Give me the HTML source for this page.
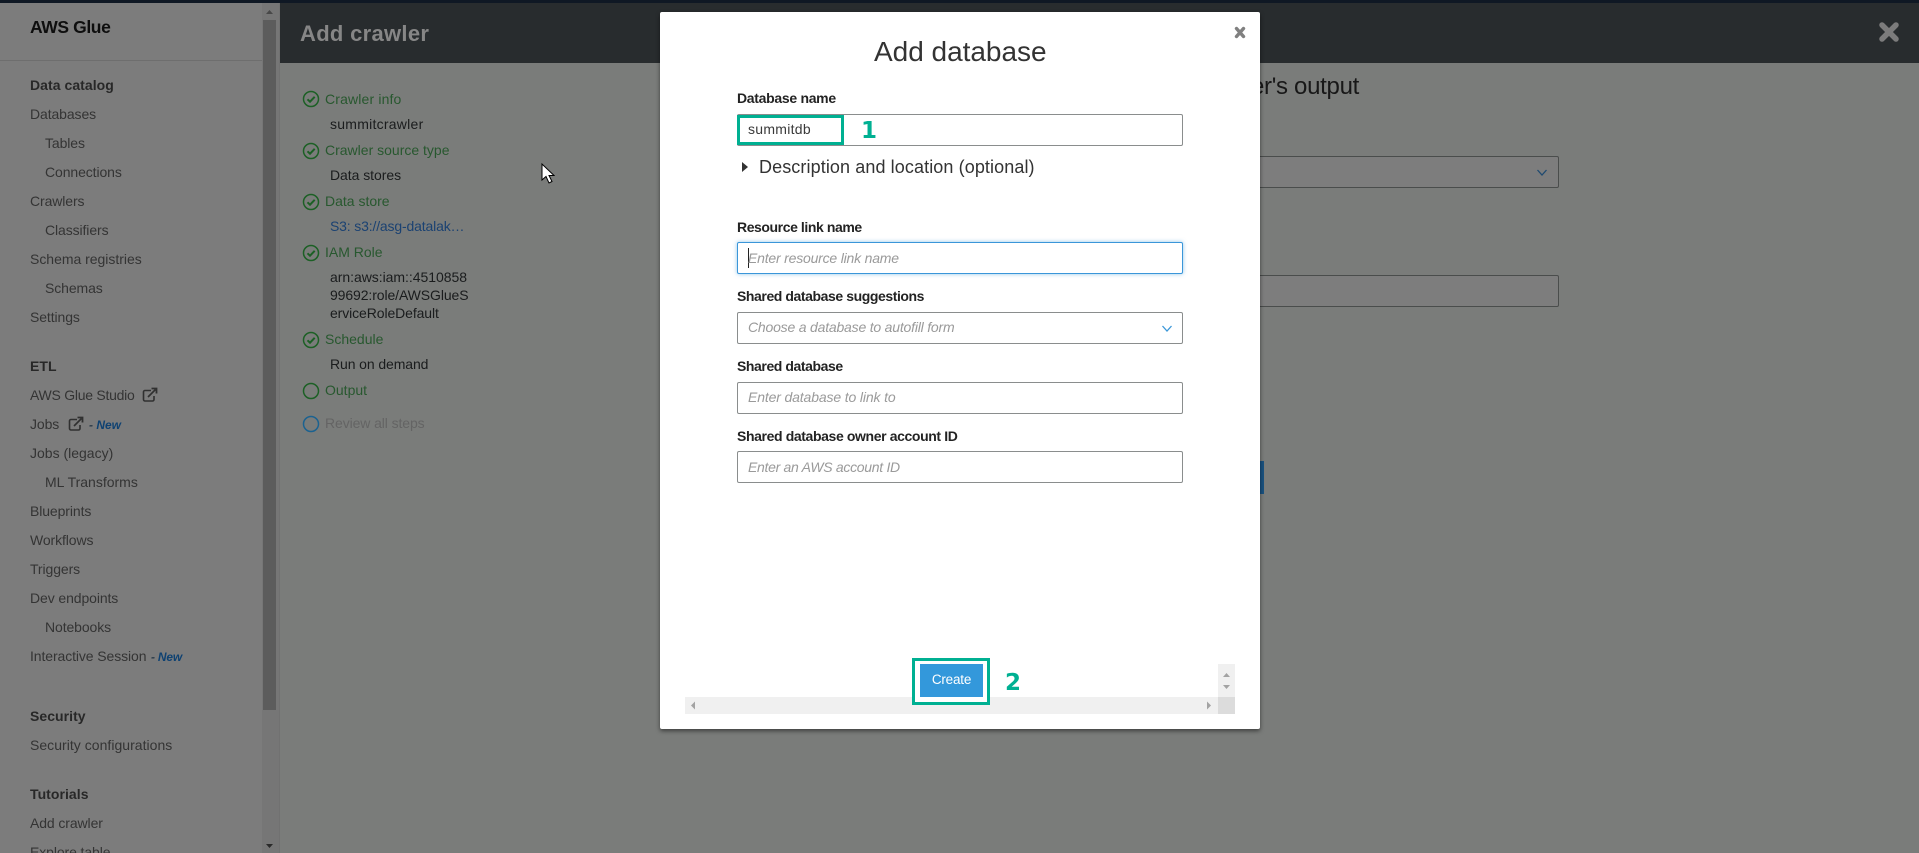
<!DOCTYPE html>
<html><head><meta charset="utf-8"><title>Add database</title>
<style>
html,body{margin:0;padding:0;width:1919px;height:853px;overflow:hidden;background:#7a7c7a}
body{position:relative;font-family:"Liberation Sans",sans-serif;font-size:14px;color:#333}
.t{position:absolute;height:20px;line-height:20px;white-space:nowrap}
.a{position:absolute}
.n{color:#343434;letter-spacing:-.1px}
.h{color:#282828;font-weight:bold;letter-spacing:.05px}
.g{color:#28582f;letter-spacing:0}
.d{color:#1a1c1d;letter-spacing:-.1px}
.l{color:#232323;font-weight:bold;letter-spacing:-.42px;font-size:14px}
.i{position:absolute;left:737px;width:444px;height:30px;border:1px solid #8a8d8d;border-radius:2px;background:#fff;box-sizing:content-box}
.p{color:#9a9a9a;font-style:italic;letter-spacing:-.2px;left:748px}
.ni{font-style:italic;font-weight:bold;font-size:12px;color:#0f4272}
.bgi{position:absolute;background:#7d7d7d;border:1px solid #4a4d4c;border-radius:2px}
.num{font-family:"DejaVu Sans",sans-serif;font-weight:bold;font-size:23px;color:#00b092;height:24px;line-height:24px}
</style></head><body>

<div class="a" style="left:0;top:0;width:1919px;height:3px;background:#0f1824"></div>
<div class="a" style="left:0;top:3px;width:280px;height:850px;background:#7c7c7c"></div>
<div class="a" style="left:262px;top:3px;width:17px;height:850px;background:#767676"></div>
<div class="a" style="left:279px;top:3px;width:1px;height:850px;background:#717171"></div>
<div class="a" style="left:263px;top:20px;width:13px;height:690px;background:#5c5c5c"></div>
<svg class="a" style="left:264px;top:8px" width="11" height="8"><path d="M2 6L5.500 2 9 6z" fill="#484848"/></svg>
<svg class="a" style="left:264px;top:842px" width="11" height="8"><path d="M2 2L5.500 6 9 2z" fill="#2a2a2a"/></svg>
<div class="a" style="left:0;top:60px;width:262px;height:1px;background:#6e6e6e"></div>

<div class="t" style="left:30px;top:17px;font-size:17.500px;font-weight:bold;color:#0e0e0e;letter-spacing:-.4px">AWS Glue</div>
<div class="t h" style="left:30px;top:75px">Data catalog</div>
<div class="t n" style="left:30px;top:104px">Databases</div>
<div class="t n" style="left:45px;top:133px">Tables</div>
<div class="t n" style="left:45px;top:162px">Connections</div>
<div class="t n" style="left:30px;top:191px">Crawlers</div>
<div class="t n" style="left:45px;top:220px">Classifiers</div>
<div class="t n" style="left:30px;top:249px;letter-spacing:-.02px">Schema registries</div>
<div class="t n" style="left:45px;top:278px">Schemas</div>
<div class="t n" style="left:30px;top:307px">Settings</div>
<div class="t h" style="left:30px;top:356px">ETL</div>
<div class="t n" style="left:30px;top:385px;letter-spacing:-.26px">AWS Glue Studio</div>
<svg class="a" style="left:142px;top:387px" width="16" height="15" fill="none" stroke="#303030" stroke-width="1.600"><path d="M9 3.500H3A1.500 1.500 0 0 0 1.500 5v7.500A1.500 1.500 0 0 0 3 14h7.500a1.500 1.500 0 0 0 1.500-1.500V9"/><path d="M6 10L13.500 2.500"/><path d="M9.500 1.500h5V6.500" stroke-width="1.800"/></svg>
<div class="t n" style="left:30px;top:414px">Jobs</div>
<svg class="a" style="left:68px;top:416px" width="16" height="15" fill="none" stroke="#303030" stroke-width="1.600"><path d="M9 3.500H3A1.500 1.500 0 0 0 1.500 5v7.500A1.500 1.500 0 0 0 3 14h7.500a1.500 1.500 0 0 0 1.500-1.500V9"/><path d="M6 10L13.500 2.500"/><path d="M9.500 1.500h5V6.500" stroke-width="1.800"/></svg>
<div class="t ni" style="left:89px;top:415px"><span style="color:#2a3a48">-</span> New</div>
<div class="t n" style="left:30px;top:443px;letter-spacing:0">Jobs (legacy)</div>
<div class="t n" style="left:45px;top:472px;letter-spacing:0">ML Transforms</div>
<div class="t n" style="left:30px;top:501px">Blueprints</div>
<div class="t n" style="left:30px;top:530px">Workflows</div>
<div class="t n" style="left:30px;top:559px">Triggers</div>
<div class="t n" style="left:30px;top:588px">Dev endpoints</div>
<div class="t n" style="left:45px;top:617px">Notebooks</div>
<div class="t n" style="left:30px;top:646px">Interactive Session</div>
<div class="t ni" style="left:151px;top:647px;letter-spacing:-.2px"><span style="color:#2a3a48">-</span> New</div>
<div class="t h" style="left:30px;top:706px">Security</div>
<div class="t n" style="left:30px;top:735px;letter-spacing:.03px">Security configurations</div>
<div class="t h" style="left:30px;top:784px">Tutorials</div>
<div class="t n" style="left:30px;top:813px">Add crawler</div>
<div class="t n" style="left:30px;top:842px">Explore table</div>

<div class="a" style="left:280px;top:3px;width:1639px;height:60px;background:#282c2e"></div>
<div class="t" style="left:300px;top:22px;font-size:22px;height:24px;line-height:24px;font-weight:bold;color:#868686;letter-spacing:.3px">Add crawler</div>
<svg class="a" style="left:1879px;top:22px" width="20" height="20"><path d="M3 3L17 17M17 3L3 17" stroke="#7c7c7c" stroke-width="5.500" stroke-linecap="round"/></svg>

<svg class="a" style="left:302px;top:90px" width="18" height="18" fill="none"><circle cx="9" cy="9" r="7.500" stroke="#1c6025" stroke-width="1.500"/><path d="M5.500 9.300L8 11.700 12.700 6.800" stroke="#1c6025" stroke-width="2"/></svg>
<div class="t g" style="left:325px;top:89px;letter-spacing:.15px">Crawler info</div>
<div class="t d" style="left:330px;top:114px;letter-spacing:.25px">summitcrawler</div>
<svg class="a" style="left:302px;top:142px" width="18" height="18" fill="none"><circle cx="9" cy="9" r="7.500" stroke="#1c6025" stroke-width="1.500"/><path d="M5.500 9.300L8 11.700 12.700 6.800" stroke="#1c6025" stroke-width="2"/></svg>
<div class="t g" style="left:325px;top:140px">Crawler source type</div>
<div class="t d" style="left:330px;top:165px;letter-spacing:-.05px">Data stores</div>
<svg class="a" style="left:302px;top:193px" width="18" height="18" fill="none"><circle cx="9" cy="9" r="7.500" stroke="#1c6025" stroke-width="1.500"/><path d="M5.500 9.300L8 11.700 12.700 6.800" stroke="#1c6025" stroke-width="2"/></svg>
<div class="t g" style="left:325px;top:191px">Data store</div>
<div class="t" style="left:330px;top:216px;color:#1b4272;letter-spacing:-.16px">S3: s3://asg-datalak…</div>
<svg class="a" style="left:302px;top:244px" width="18" height="18" fill="none"><circle cx="9" cy="9" r="7.500" stroke="#1c6025" stroke-width="1.500"/><path d="M5.500 9.300L8 11.700 12.700 6.800" stroke="#1c6025" stroke-width="2"/></svg>
<div class="t g" style="left:325px;top:242px">IAM Role</div>
<div class="t d" style="left:330px;top:267px;letter-spacing:-.04px">arn:aws:iam::4510858</div>
<div class="t d" style="left:330px;top:285px;letter-spacing:-.1px">99692:role/AWSGlueS</div>
<div class="t d" style="left:330px;top:303px">erviceRoleDefault</div>
<svg class="a" style="left:302px;top:331px" width="18" height="18" fill="none"><circle cx="9" cy="9" r="7.500" stroke="#1c6025" stroke-width="1.500"/><path d="M5.500 9.300L8 11.700 12.700 6.800" stroke="#1c6025" stroke-width="2"/></svg>
<div class="t g" style="left:325px;top:329px">Schedule</div>
<div class="t d" style="left:330px;top:354px">Run on demand</div>
<svg class="a" style="left:302px;top:382px" width="18" height="18" fill="none"><circle cx="9" cy="9" r="7.500" stroke="#1c6025" stroke-width="1.500"/></svg>
<div class="t g" style="left:325px;top:380px">Output</div>
<svg class="a" style="left:302px;top:415px" width="18" height="18" fill="none"><circle cx="9" cy="9" r="7.500" stroke="#1b6290" stroke-width="1.500"/></svg>
<div class="t" style="left:325px;top:413px;color:#646464;letter-spacing:-.1px">Review all steps</div>

<svg class="a" style="left:539px;top:162px" width="16" height="24"><path d="M3 2V18L7 14.500 10 21 13 19.500 10 13.500H15z" fill="#fff" stroke="#000" stroke-width="1"/></svg>

<div class="t" style="right:560px;top:73px;height:28px;line-height:28px;font-size:24px;color:#181818;letter-spacing:-.3px">Configure the crawler's output</div>
<div class="bgi" style="left:1200px;top:156px;width:357px;height:30px"></div>
<svg class="a" style="left:1536px;top:168px" width="12" height="9" fill="none"><path d="M1.500 2L6 7 10.500 2" stroke="#1f4a70" stroke-width="1.300"/></svg>
<div class="bgi" style="left:1200px;top:275px;width:357px;height:30px"></div>
<div class="a" style="left:1200px;top:461px;width:64px;height:33px;background:#1a5280"></div>

<div class="a" style="left:660px;top:12px;width:600px;height:717px;background:#fff;border-radius:2px;box-shadow:0 2px 4px rgba(0,0,0,.5)"></div>
<svg class="a" style="left:1234px;top:26px" width="12" height="13"><path d="M2.500 2.500L9.500 10.500M9.500 2.500L2.500 10.500" stroke="#808080" stroke-width="3.400" stroke-linecap="round"/></svg>

<div class="t" style="left:874px;top:34px;height:36px;line-height:36px;font-size:28px;color:#333;letter-spacing:-.02px">Add database</div>

<div class="t l" style="left:737px;top:88px;letter-spacing:-.3px">Database name</div>
<div class="i" style="top:114px"></div>
<div class="a" style="left:737px;top:115px;width:107px;height:30px;border:3px solid #00b092;box-sizing:border-box"></div>
<div class="t" style="left:748px;top:119px;color:#3a3a3a;letter-spacing:.28px">summitdb</div>
<div class="t num" style="left:861px;top:119px">1</div>

<svg class="a" style="left:741px;top:161px" width="8" height="12"><path d="M1 1L7 6 1 11z" fill="#333"/></svg>
<div class="t" style="left:759px;top:157px;font-size:18px;color:#333;letter-spacing:.1px">Description and location (optional)</div>

<div class="t l" style="left:737px;top:217px">Resource link name</div>
<div class="i" style="top:242px;border-color:#3b96d9;box-shadow:0 0 4px rgba(59,150,217,.55)"></div>
<div class="a" style="left:748px;top:248px;width:1px;height:20px;background:#222"></div>
<div class="t p" style="top:248px">Enter resource link name</div>

<div class="t l" style="left:737px;top:286px">Shared database suggestions</div>
<div class="i" style="top:312px"></div>
<div class="t p" style="top:317px">Choose a database to autofill form</div>
<svg class="a" style="left:1161px;top:324px" width="12" height="9" fill="none"><path d="M1.500 2L6 7 10.500 2" stroke="#3a97d8" stroke-width="1.300"/></svg>

<div class="t l" style="left:737px;top:356px">Shared database</div>
<div class="i" style="top:382px"></div>
<div class="t p" style="top:387px;letter-spacing:-.14px">Enter database to link to</div>

<div class="t l" style="left:737px;top:426px;letter-spacing:-.38px">Shared database owner account ID</div>
<div class="i" style="top:451px"></div>
<div class="t p" style="top:457px;letter-spacing:-.3px">Enter an AWS account ID</div>

<div class="a" style="left:685px;top:697px;width:533px;height:17px;background:#f0f0f0"></div>
<div class="a" style="left:1218px;top:664px;width:17px;height:33px;background:#f0f0f0"></div>
<div class="a" style="left:1218px;top:697px;width:17px;height:17px;background:#dcdcdc"></div>
<svg class="a" style="left:1221px;top:668px" width="11" height="26"><path d="M2 9L5.500 5 9 9zM2 17H9L5.500 21z" fill="#a3a3a3"/></svg>
<svg class="a" style="left:688px;top:700px" width="10" height="11"><path d="M7 1.500V9.500L3 5.500z" fill="#a3a3a3"/></svg>
<svg class="a" style="left:1204px;top:700px" width="10" height="11"><path d="M3 1.500V9.500L7 5.500z" fill="#a3a3a3"/></svg>

<div class="a" style="left:912px;top:658px;width:78px;height:47px;border:3px solid #00b092;box-sizing:border-box;background:#fff"></div>
<div class="a" style="left:920px;top:664px;width:63px;height:33px;background:#3398db"></div>
<div class="t" style="left:920px;top:670px;width:63px;text-align:center;color:#fff;letter-spacing:-.2px;font-size:13.500px">Create</div>
<div class="t num" style="left:1005px;top:671px">2</div>

</body></html>
